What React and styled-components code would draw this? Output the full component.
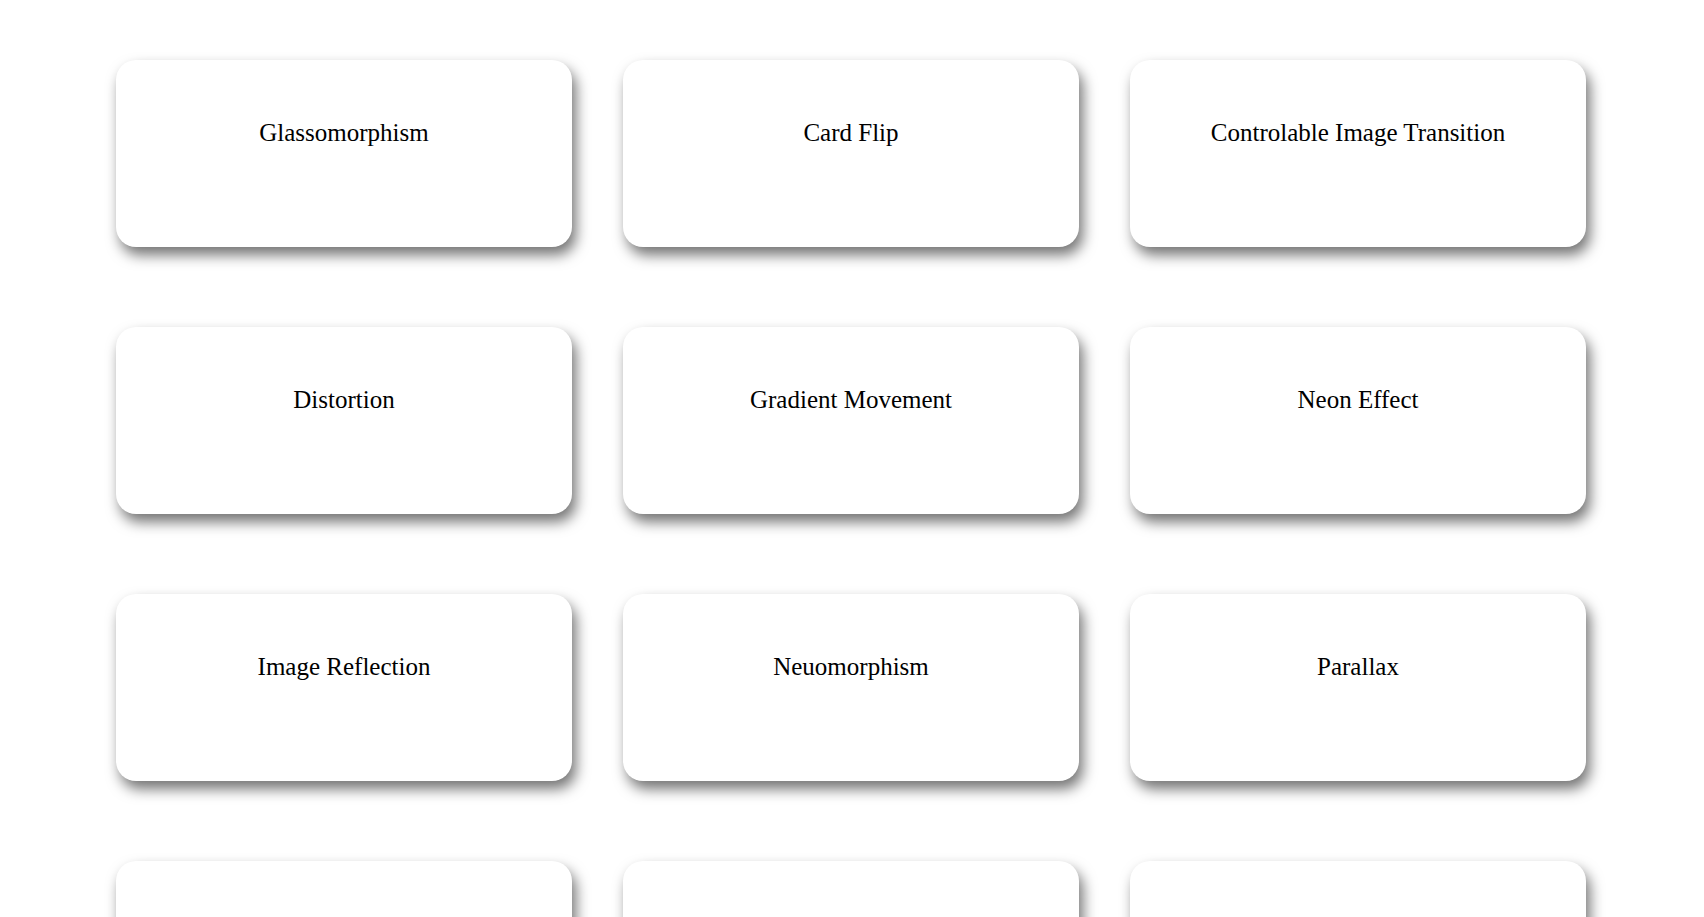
import styled, { createGlobalStyle } from "styled-components";

const GlobalStyle = createGlobalStyle`
  body {
    margin: 0;
    background-color: #ffffff;
    font-family: "Liberation Serif", "Times New Roman", serif;
  }
`;

const Grid = styled.div`
  display: grid;
  grid-template-columns: repeat(3, 456px);
  column-gap: 51px;
  row-gap: 80px;
  padding: 60px 0 60px 116px;
`;

const Card = styled.div`
  height: 187px;
  background-color: #ffffff;
  border-radius: 20px;
  box-shadow: 4px 8px 14px rgba(0, 0, 0, 0.55);
  display: flex;
  justify-content: center;
  cursor: pointer;
`;

const Title = styled.p`
  margin: 0;
  padding-top: 59px;
  font-size: 25px;
  color: #000000;
`;

const items = [
  "Glassomorphism",
  "Card Flip",
  "Controlable Image Transition",
  "Distortion",
  "Gradient Movement",
  "Neon Effect",
  "Image Reflection",
  "Neuomorphism",
  "Parallax",
  "Text Animation",
  "Loader",
  "Hover Effect",
];

const App = () => {
  return (
    <>
      <GlobalStyle />
      <Grid>
        {items.map((name) => (
          <Card key={name}>
            <Title>{name}</Title>
          </Card>
        ))}
      </Grid>
    </>
  );
};

export default App;
